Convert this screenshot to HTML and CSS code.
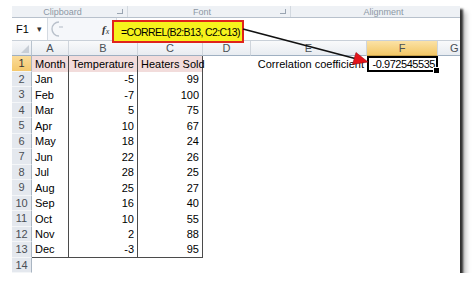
FILE: index.html
```html
<!DOCTYPE html>
<html lang="en">
<head>
    <meta charset="UTF-8">
    <meta name="viewport" content="width=device-width, initial-scale=1.0">
    <title>CORREL example</title>
    <link rel="stylesheet" href="styles.css">
</head>
<body>
    <div class="window">
        <div class="ribbon">
            <div class="group group-clip"><span>Clipboard</span><i class="launcher"></i></div>
            <div class="group group-font"><span>Font</span><i class="launcher"></i></div>
            <div class="group group-align"><span>Alignment</span></div>
        </div>
        <div class="formula-bar">
            <div class="name-box">F1<span class="caret">&#9662;</span></div>
            <div class="grip">
                <svg width="14" height="16" viewBox="0 0 14 16"><path d="M8 1 A7 7 0 0 0 8 15" fill="none" stroke="#b9c1cb" stroke-width="1.4"/><circle cx="9" cy="6" r="0.9" fill="#c3cad3"/><circle cx="11" cy="6" r="0.9" fill="#c3cad3"/></svg>
            </div>
            <div class="fx"><i>f</i><span>x</span></div>
            <div class="formula-input"></div>
        </div>
        <div class="sheet" id="sheet"></div>
    </div>

    <div class="callout">=CORREL(B2:B13, C2:C13)</div>
    <svg class="arrow" width="474" height="287" viewBox="0 0 474 287">
        <line x1="243" y1="29" x2="355" y2="58.5" stroke="#111" stroke-width="1.8"/>
        <polygon points="368,62 352.5,64.5 356,52.5" fill="#e3141b" stroke="#9b0d10" stroke-width="0.6"/>
    </svg>

    <script>
        const columns = ['A', 'B', 'C', 'D', 'E', 'F', 'G'];
        const rows = [
            ['Month', 'Temperature', 'Heaters Sold'],
            ['Jan', -5, 99],
            ['Feb', -7, 100],
            ['Mar', 5, 75],
            ['Apr', 10, 67],
            ['May', 18, 24],
            ['Jun', 22, 26],
            ['Jul', 28, 25],
            ['Aug', 25, 27],
            ['Sep', 16, 40],
            ['Oct', 10, 55],
            ['Nov', 2, 88],
            ['Dec', -3, 95]
        ];

        function makeCell(className, text) {
            const div = document.createElement('div');
            div.className = className;
            if (text !== undefined) div.textContent = text;
            return div;
        }

        const sheet = document.getElementById('sheet');

        // column headers
        sheet.appendChild(makeCell('corner'));
        columns.forEach(col => {
            const cls = 'col-head' + (col === 'F' ? ' selected' : '') + (col === 'G' ? ' cut' : '');
            sheet.appendChild(makeCell(cls, col));
        });

        // rows 1..14
        for (let r = 1; r <= 14; r++) {
            sheet.appendChild(makeCell('row-head' + (r === 1 ? ' selected' : ''), r));
            const values = rows[r - 1] || [];
            columns.forEach((col, i) => {
                let cls = 'cell';
                let text = '';
                if (i < 3 && r <= 13) {
                    cls += ' boxed';
                    if (r === 1) cls += ' title';
                    if (r === 13) cls += ' last';
                    text = values[i];
                    if (typeof text === 'number') cls += ' num';
                }
                if (col === 'E' && r === 1) {
                    cls += ' num';
                    text = 'Correlation coefficient';
                }
                const cell = makeCell(cls, text);
                if (col === 'F' && r === 1) {
                    cell.className = 'cell num active';
                    cell.textContent = '-0.972545535';
                    cell.appendChild(makeCell('handle'));
                }
                sheet.appendChild(cell);
            });
        }
    </script>
</body>
</html>
```

FILE: styles.css
```css
body {
    margin: 0;
    background-color: #fff;
    font-family: 'Liberation Sans', Arial, sans-serif;
    font-size: 11px;
    color: #000;
}
.window {
    margin: 6px 0 0 12px;
    width: 448px;
    height: 267px;
    background-color: #fff;
    overflow: hidden;
    box-shadow: 3px 3px 2px rgba(0,0,0,0.75), 6px 6px 5px rgba(0,0,0,0.25);
}
.ribbon {
    display: flex;
    height: 11px;
    background-color: #eef1f5;
    border-bottom: 1px solid #b8c1cc;
}
.group {
    display: flex;
    justify-content: center;
    align-items: flex-end;
    position: relative;
    border-right: 1px solid #d3d9e0;
    color: #8d98a5;
    font-size: 9px;
    line-height: 10px;
}
.group-clip {
    width: 116px;
    padding-right: 14px;
    box-sizing: border-box;
}
.group-font {
    width: 163px;
    padding-right: 14px;
    box-sizing: border-box;
}
.group-align {
    flex: 1;
    padding-left: 16px;
    border-right: none;
}
.launcher {
    position: absolute;
    right: 4px;
    top: 3px;
    width: 5px;
    height: 4px;
    border-right: 1px solid #9aa5b2;
    border-bottom: 1px solid #9aa5b2;
}
.formula-bar {
    display: flex;
    height: 23px;
    background-color: #f5f7fa;
    border-bottom: 1px solid #c9d0d8;
    box-sizing: border-box;
}
.name-box {
    display: flex;
    align-items: center;
    width: 36px;
    padding-left: 4px;
    box-sizing: border-box;
    background-color: #fff;
    border-right: 1px solid #d4dae1;
    font-size: 11px;
}
.caret {
    margin-left: 8px;
    font-size: 9px;
    color: #333;
}
.grip {
    display: flex;
    align-items: center;
    width: 50px;
    padding-left: 3px;
}
.fx {
    display: flex;
    align-items: center;
    width: 14px;
    padding-left: 1px;
    font-family: 'Liberation Serif', serif;
    font-size: 11px;
    color: #333;
}
.fx i {
    font-weight: bold;
}
.fx span {
    font-size: 8px;
    font-style: italic;
    margin-top: 4px;
}
.formula-input {
    flex: 1;
    background-color: #fff;
    border-left: 1px solid #d4dae1;
}
.sheet {
    display: grid;
    grid-template-columns: 20px 37px 69px 65px 48px 116px 71px 22px;
    grid-template-rows: 15px;
    grid-auto-rows: 15.5px;
}
.corner {
    position: relative;
    background: linear-gradient(#f7f8fa, #e6eaef);
    border-right: 1px solid #b9c3ce;
    border-bottom: 1px solid #9fb0c2;
}
.corner::after {
    content: '';
    position: absolute;
    right: 2px;
    bottom: 2px;
    border-left: 8px solid transparent;
    border-bottom: 8px solid #c8ced6;
}
.col-head {
    display: flex;
    align-items: center;
    justify-content: center;
    background: linear-gradient(#f9fafb, #e8ecf1);
    border-right: 1px solid #cfd5dc;
    border-bottom: 1px solid #9fb0c2;
    color: #4a4f55;
}
.col-head.selected {
    background: linear-gradient(#fbe2a6, #f3c766);
    border-bottom-color: #c9a24a;
}
.col-head.cut {
    justify-content: flex-start;
    padding-left: 12px;
    border-right: none;
}
.row-head {
    display: flex;
    align-items: center;
    justify-content: center;
    background-color: #e4e8ee;
    border-right: 1px solid #a9b5c2;
    border-bottom: 1px solid #f4f6f8;
    color: #4a4f55;
}
.row-head.selected {
    background: linear-gradient(#fbdc9a, #f4c86c);
    color: #333;
}
.cell {
    display: flex;
    align-items: center;
    padding: 0 3px;
    white-space: nowrap;
}
.cell.boxed {
    border-right: 1px solid #4b4b4b;
}
.cell.title {
    background-color: #f2dcdb;
}
.cell.last {
    border-bottom: 1px solid #4b4b4b;
}
.cell.num {
    justify-content: flex-end;
}
.cell.active {
    position: relative;
    border: 2px solid #000;
    padding: 0 1px 0 0;
    letter-spacing: -0.45px;
}
.handle {
    position: absolute;
    right: -4px;
    bottom: -4px;
    width: 5px;
    height: 5px;
    background-color: #000;
    border: 1px solid #fff;
}
.callout {
    position: absolute;
    left: 112px;
    top: 20px;
    width: 132px;
    height: 23px;
    box-sizing: border-box;
    display: flex;
    align-items: center;
    padding-left: 7px;
    background-color: #f6f21c;
    border: 2px solid #e0241b;
    font-size: 10.5px;
    letter-spacing: -0.6px;
    white-space: nowrap;
}
.arrow {
    position: absolute;
    left: 0;
    top: 0;
    pointer-events: none;
}
```
